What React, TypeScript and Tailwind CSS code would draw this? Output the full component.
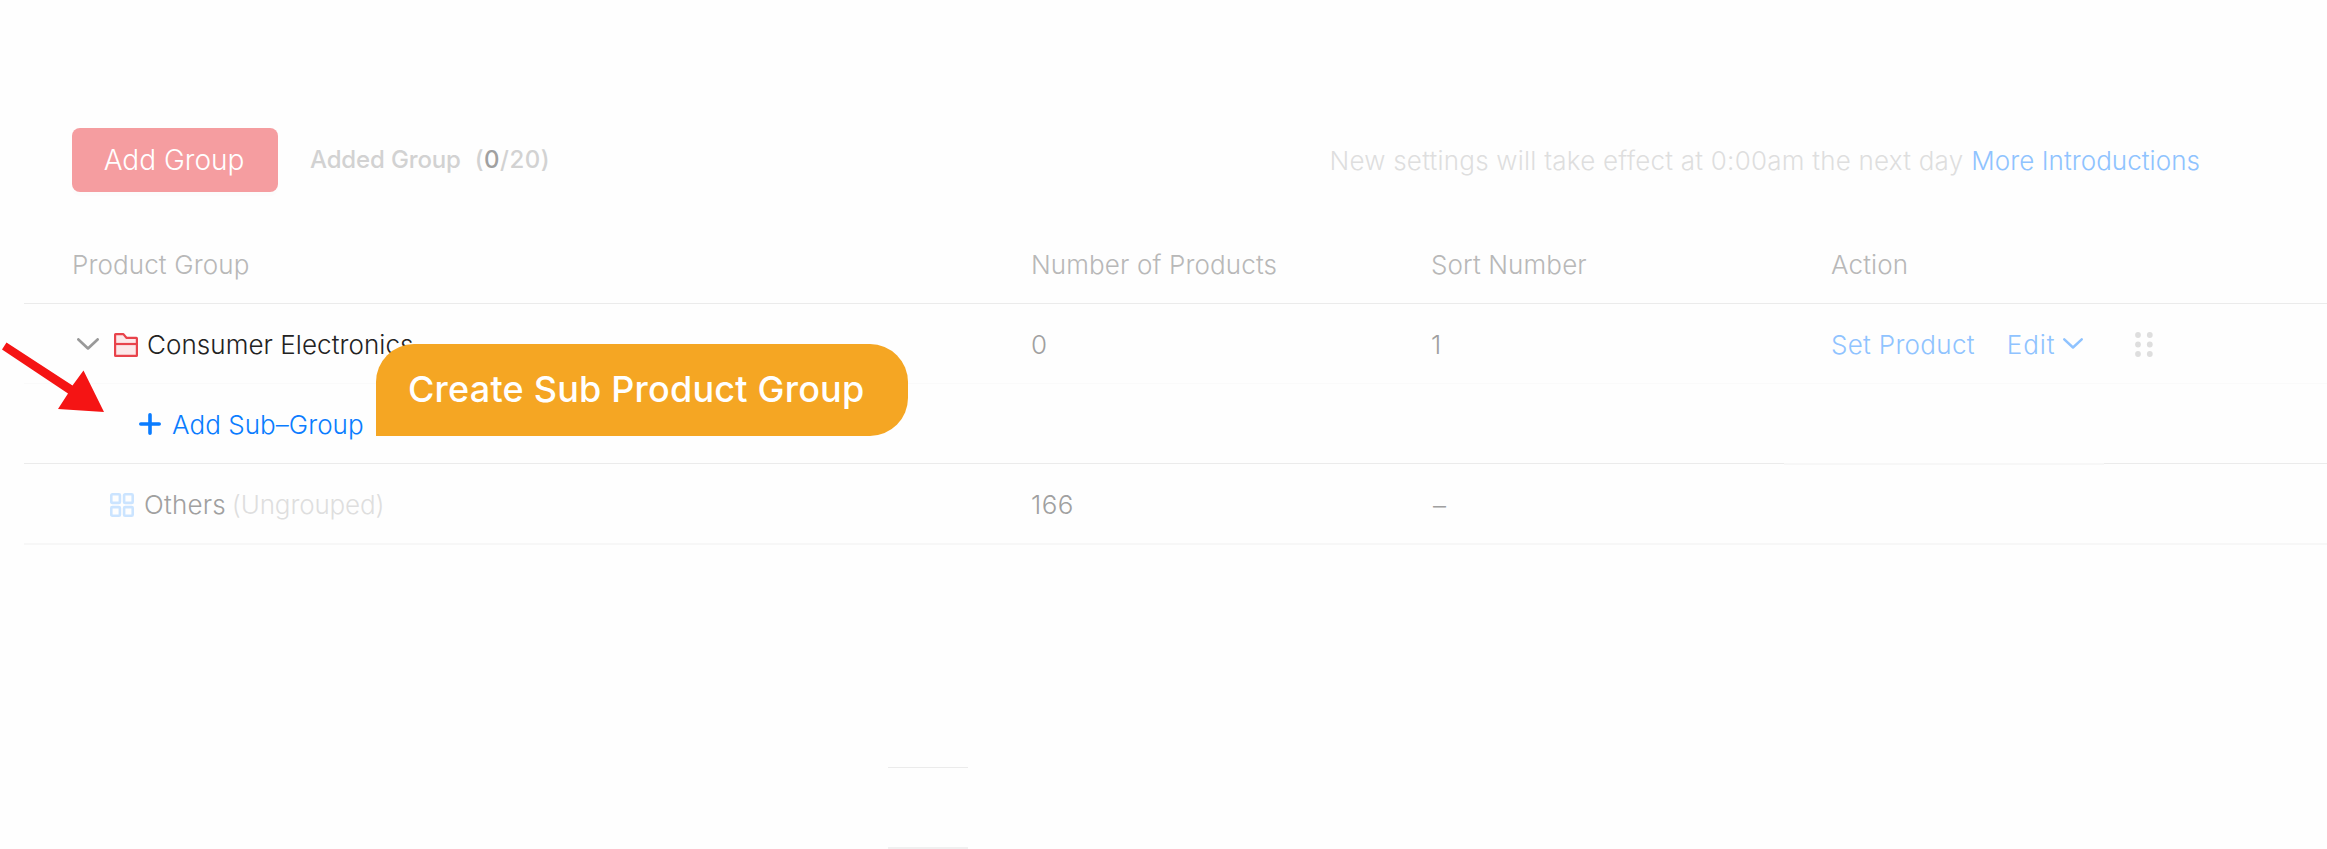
import type { ReactNode } from "react";

const ChevronIcon = ({ className }: { className: string }) => (
  <svg
    viewBox="0 0 22 12"
    className={className}
    fill="none"
    stroke="currentColor"
    strokeWidth="2.7"
    strokeLinecap="round"
    strokeLinejoin="round"
  >
    <path d="M1.4 1.4 11 10.4 20.6 1.4" />
  </svg>
);

const FolderIcon = () => (
  <svg viewBox="0 0 24 24" className="h-6 w-6" stroke="#e8434b" strokeWidth="2.2" strokeLinejoin="round">
    <path d="M1.1 1.6Q1.1 1.1 1.6 1.1H9.4L12.4 4.8H22.4Q22.9 4.8 22.9 5.4V22.4Q22.9 22.9 22.4 22.9H1.6Q1.1 22.9 1.1 22.4Z" fill="#fce8e9" />
    <path d="M1 11H23" />
  </svg>
);

const PlusIcon = () => (
  <svg viewBox="0 0 22 22" className="mb-0.5 h-[22px] w-[22px]" stroke="#0a7cff" strokeWidth="3.6" strokeLinecap="round">
    <path d="M1.8 11H20.2M11 1.8V20.2" />
  </svg>
);

const GridIcon = () => (
  <svg viewBox="0 0 24 24" className="h-6 w-6" fill="none" stroke="#cbe4ff" strokeWidth="2.6">
    <rect x="1.3" y="1.3" width="8.6" height="8.6" rx="1" />
    <rect x="14.1" y="1.3" width="8.6" height="8.6" rx="1" />
    <rect x="1.3" y="14.1" width="8.6" height="8.6" rx="1" />
    <rect x="14.1" y="14.1" width="8.6" height="8.6" rx="1" />
  </svg>
);

const DragIcon = () => (
  <svg viewBox="0 0 18 25" className="h-[25px] w-[18px]" fill="#dedede">
    {[3, 12.5, 22].map((y) => (
      <g key={y}>
        <circle cx="3" cy={y} r="2.9" />
        <circle cx="14.8" cy={y} r="2.9" />
      </g>
    ))}
  </svg>
);

const Row = ({ className, children }: { className: string; children?: ReactNode }) => (
  <div className={`grid grid-cols-[959px_400px_400px_1fr] items-center pt-0.5 pl-12 ${className}`}>
    {children}
  </div>
);

const App = () => {
  return (
    <div className="relative h-[849px] w-[2327px] overflow-hidden bg-[#fefefe] font-['Inter',sans-serif] text-[26px] leading-8 font-light whitespace-nowrap">
      <div className="flex h-[224px] items-start pt-32 pl-[72px]">
        <button className="h-16 w-[206px] rounded-lg bg-[#f59da0] pr-0.5 text-[28px] text-white shadow-[0_4px_0_#fcfcfc]">
          Add Group
        </button>
        <div className="ml-8 flex h-16 items-center text-2xl font-[450] tracking-[-0.15px] text-[#d2d2d2]">
          Added Group
          <span className="ml-3.5 tracking-[0.5px]">
            (<span className="font-medium text-[#a0a0a0]">0</span>/20)
          </span>
        </div>
        <div className="mr-[127px] ml-auto flex h-16 items-center gap-2 pt-px text-[#dedede]">
          <span className="tracking-[0.22px]">New settings will take effect at 0:00am the next day</span>
          <a className="tracking-[0.05px] text-[#8fc3ff]">More Introductions</a>
        </div>
      </div>

      <div className="ml-6">
        <Row className="h-20 border-b border-[#ebebeb] tracking-[0.12px] text-[#b8b8b8]">
          <span>Product Group</span>
          <span>Number of Products</span>
          <span>Sort Number</span>
          <span>Action</span>
        </Row>
        <Row className="h-20 border-b border-[#fafafa] text-[#a0a0a0]">
          <div className="flex items-center pl-[5px] text-[#222]">
            <ChevronIcon className="mb-0.5 h-3 w-[22px] text-[#999]" />
            <span className="ml-[15px]">
              <FolderIcon />
            </span>
            <span className="ml-[9px] tracking-[0.06px]">Consumer Electronics</span>
          </div>
          <span>0</span>
          <span>1</span>
          <div className="flex items-center text-[#8fc3ff]">
            <span className="tracking-[0.3px]">Set Product</span>
            <span className="ml-8 tracking-[0.9px]">Edit</span>
            <ChevronIcon className="mb-0.5 ml-2 h-[11px] w-[20px]" />
            <span className="ml-[52px]">
              <DragIcon />
            </span>
          </div>
        </Row>
        <Row className="h-20 border-b border-[#ebebeb]">
          <div className="flex items-center pl-[67px] text-[#0a7cff]">
            <PlusIcon />
            <span className="ml-[11px] tracking-[0.05px]">Add Sub–Group</span>
          </div>
        </Row>
        <Row className="h-[81px] border-b-2 border-[#f7f7f7] text-[#a0a0a0]">
          <div className="flex items-center pl-[38px]">
            <GridIcon />
            <span className="ml-2.5 tracking-[0.2px]">Others</span>
            <span className="ml-1.5 tracking-[-0.15px] text-[#dedede]">(Ungrouped)</span>
          </div>
          <span className="tracking-[0.5px]">166</span>
          <span className="pt-0.5 pl-0.5">–</span>
        </Row>
      </div>

      <div className="mt-[222px] ml-[888px] h-[82px] w-20 border-t border-b-2 border-t-[#ebebeb] border-b-[#f0f0f0]" />

      {/* fainter stretch of the divider above "Others" */}
      <div className="absolute top-[463px] left-[1784px] h-0.5 w-[320px] bg-[#f7f7f7]" />

      <svg viewBox="0 0 110 80" className="absolute top-[336px] left-0 h-20 w-[110px]" fill="#f51414">
        <path d="M6.5 6.5 72.5 49.5 83.5 34.5 104 76 58 73 68 57.5 2 13.5Z" />
      </svg>

      <div className="absolute top-[344px] left-[376px] flex h-[92px] w-[532px] items-center rounded-[38px] rounded-bl-none bg-[#f5a623] pb-0.5 pl-8 text-[36px] font-medium tracking-[0.21px] text-white">
        Create Sub Product Group
      </div>
    </div>
  );
};

export default App;
